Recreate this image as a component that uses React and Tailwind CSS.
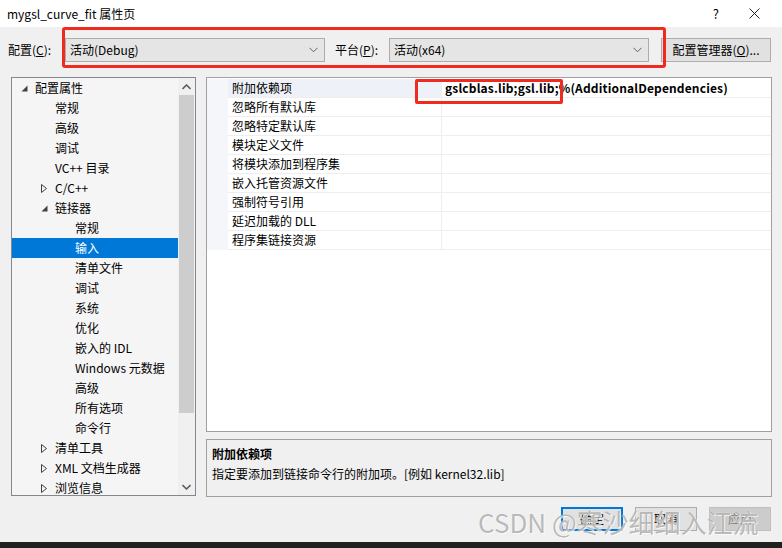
import React from "react";

const font = { fontFamily: '"Noto Sans CJK SC", "Noto Sans", sans-serif' };

const tree = [
  { label: "配置属性", depth: 0, mark: "open" },
  { label: "常规", depth: 1 },
  { label: "高级", depth: 1 },
  { label: "调试", depth: 1 },
  { label: "VC++ 目录", depth: 1 },
  { label: "C/C++", depth: 1, mark: "closed" },
  { label: "链接器", depth: 1, mark: "open" },
  { label: "常规", depth: 2 },
  { label: "输入", depth: 2, selected: true },
  { label: "清单文件", depth: 2 },
  { label: "调试", depth: 2 },
  { label: "系统", depth: 2 },
  { label: "优化", depth: 2 },
  { label: "嵌入的 IDL", depth: 2 },
  { label: "Windows 元数据", depth: 2 },
  { label: "高级", depth: 2 },
  { label: "所有选项", depth: 2 },
  { label: "命令行", depth: 2 },
  { label: "清单工具", depth: 1, mark: "closed" },
  { label: "XML 文档生成器", depth: 1, mark: "closed" },
  { label: "浏览信息", depth: 1, mark: "closed" },
];

const props = [
  "附加依赖项",
  "忽略所有默认库",
  "忽略特定默认库",
  "模块定义文件",
  "将模块添加到程序集",
  "嵌入托管资源文件",
  "强制符号引用",
  "延迟加载的 DLL",
  "程序集链接资源",
];

const Chevron = () => (
  <svg width="9" height="6" viewBox="0 0 9 6" className="mr-[6px]">
    <path d="M0.5 0.8 L4.5 4.8 L8.5 0.8" fill="none" stroke="#606060" strokeWidth="1" />
  </svg>
);

const Select = ({ value }) => (
  <div className="w-[260px] h-[24px] flex items-center justify-between bg-[#e5e5e5] border border-[#adadad] pl-[4px]">
    <span>{value}</span>
    <Chevron />
  </div>
);

const Marker = ({ mark }) => {
  if (mark === "open")
    return (
      <svg width="7" height="7" viewBox="0 0 7 7">
        <path d="M6.5 0.5 L6.5 6.5 L0.5 6.5 Z" fill="#404040" />
      </svg>
    );
  if (mark === "closed")
    return (
      <svg width="6" height="9" viewBox="0 0 6 9">
        <path d="M0.5 0.5 L5.5 4.5 L0.5 8.5 Z" fill="none" stroke="#404040" strokeWidth="1" />
      </svg>
    );
  return null;
};

const TreeRow = ({ item }) => {
  const indent = item.depth === 0 ? "pl-[9px]" : item.depth === 1 ? "pl-[29px]" : "pl-[63px]";
  return (
    <div
      className={`h-[20px] flex items-center ${indent} ${
        item.selected ? "bg-[#0078d7] text-white" : "text-black"
      }`}
    >
      {item.depth < 2 && (
        <span className="w-[14px] flex items-center">
          <Marker mark={item.mark} />
        </span>
      )}
      <span>{item.label}</span>
    </div>
  );
};

export default function App() {
  return (
    <div
      className="relative w-[782px] h-[548px] bg-[#f0f0f0] flex flex-col overflow-hidden text-[12px] text-black"
      style={font}
    >
      {/* title bar */}
      <div className="h-[27px] bg-white flex items-center pl-[7px] pr-[22px] text-[12px]">
        <span>mygsl_curve_fit 属性页</span>
        <span className="ml-auto mr-[30px] text-[13px]">?</span>
        <svg width="11" height="11" viewBox="0 0 11 11">
          <path d="M0.5 0.5 L10.5 10.5 M10.5 0.5 L0.5 10.5" stroke="#222" strokeWidth="1" />
        </svg>
      </div>

      {/* configuration / platform row */}
      <div className="h-[43px] flex items-center pl-[8px] pt-[3px]">
        <span className="w-[57px]">
          配置(<span className="underline">C</span>):
        </span>
        <Select value="活动(Debug)" />
        <span className="ml-[10px] w-[54px]">
          平台(<span className="underline">P</span>):
        </span>
        <Select value="活动(x64)" />
        <div className="ml-[12px] w-[110px] h-[24px] flex items-center justify-center bg-[#e1e1e1] border border-[#adadad]">
          配置管理器(<span className="underline">O</span>)...
        </div>
      </div>

      {/* main area */}
      <div className="flex mt-[7px] pl-[11px] gap-[10px]">
        {/* tree */}
        <div className="w-[185px] h-[419px] border border-[#828790] bg-[#f5f5f5] flex">
          <div className="w-[166px] overflow-hidden">
            {tree.map((item, i) => (
              <TreeRow key={i} item={item} />
            ))}
          </div>
          <div className="w-[17px] bg-[#f0f0f0] flex flex-col items-center">
            <div className="h-[17px] flex items-center justify-center">
              <svg width="9" height="6" viewBox="0 0 9 6">
                <path d="M0.5 5 L4.5 1 L8.5 5" fill="none" stroke="#606060" strokeWidth="1.6" />
              </svg>
            </div>
            <div className="w-[15px] h-[318px] bg-[#cdcdcd]" />
            <div className="mt-auto h-[17px] flex items-center justify-center">
              <svg width="9" height="6" viewBox="0 0 9 6">
                <path d="M0.5 1 L4.5 5 L8.5 1" fill="none" stroke="#606060" strokeWidth="1.6" />
              </svg>
            </div>
          </div>
        </div>

        {/* property grid + description */}
        <div className="w-[566px] flex flex-col">
          <div className="h-[355px] border border-[#a0a0a0] bg-white pt-[1px]">
            {props.map((name, i) => (
              <div key={i} className="h-[19px] flex">
                <div className="w-[21px] bg-[#f4f6fa]" />
                <div
                  className={`w-[214px] flex items-center pl-[4px] border-b border-r border-[#eeeeee] ${
                    i === 0 ? "bg-[#eef2f8]" : "bg-white"
                  }`}
                >
                  {name}
                </div>
                <div className="flex-1 flex items-center pl-[3px] border-b border-[#eeeeee] font-bold text-[12px] tracking-[0.15px]">
                  {i === 0 && "gslcblas.lib;gsl.lib;%(AdditionalDependencies)"}
                </div>
              </div>
            ))}
          </div>
          <div className="mt-[7px] h-[58px] border border-[#a0a0a0] bg-[#f0f0f0] px-[5px] pt-[4px] leading-[20px]">
            <div className="font-bold">附加依赖项</div>
            <div>指定要添加到链接命令行的附加项。[例如 kernel32.lib]</div>
          </div>
        </div>
      </div>

      {/* dialog buttons */}
      <div className="flex justify-end gap-[12px] pr-[11px] mt-[10px]">
        <div className="w-[62px] h-[24px] flex items-center justify-center bg-[#e1e1e1] border-2 border-[#0078d7]">
          确定
        </div>
        <div className="w-[62px] h-[24px] flex items-center justify-center bg-[#e1e1e1] border border-[#adadad]">
          取消
        </div>
        <div className="w-[62px] h-[24px] flex items-center justify-center bg-[#cccccc] border border-[#bfbfbf] text-[#838383]">
          应用
        </div>
      </div>

      <div className="mt-auto h-[6px] bg-[#202020]" />

      {/* red annotation frames */}
      <div className="absolute left-[62px] top-[27px] w-[604px] h-[41px] border-[3px] border-[#f02a1e] rounded-[3px]" />
      <div className="absolute left-[415px] top-[79px] w-[148px] h-[25px] border-[3px] border-[#f02a1e] rounded-[2px]" />

      {/* watermark */}
      <div
        className="absolute left-[478px] top-[505px] text-[26px] leading-[34px] text-[#8a8a8a]/60 whitespace-nowrap"
        style={{ textShadow: "0 0 1px #ffffff, 1px 1px 0 rgba(255,255,255,0.7)" }}
      >
        CSDN @寒沙细细入江流
      </div>
    </div>
  );
}
